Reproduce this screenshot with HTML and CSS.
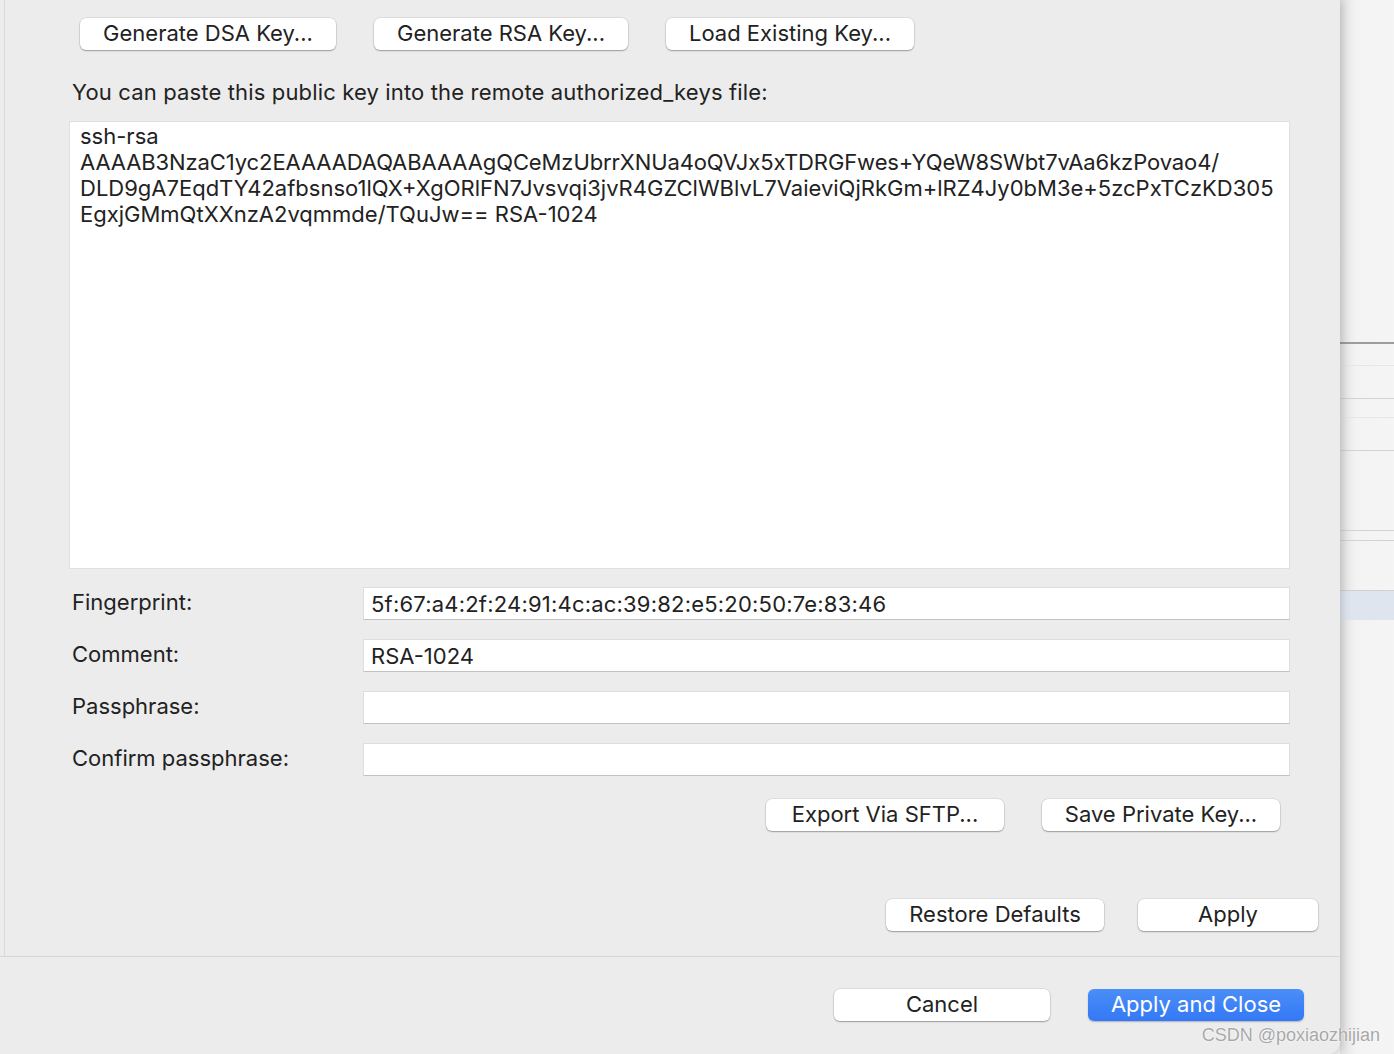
FILE: index.html
```html
<!DOCTYPE html>
<html lang="en">
<head>
  <meta charset="UTF-8" />
  <title>SSH2 Key Management</title>
  <link rel="stylesheet" href="styles.css">
</head>
<body>

  <div class="window">

    <!-- Key management page -->
    <div class="panel">
      <div class="key-buttons">
        <button class="btn btn-dsa">Generate DSA Key...</button>
        <button class="btn btn-rsa">Generate RSA Key...</button>
        <button class="btn btn-load">Load Existing Key...</button>
      </div>

      <p class="hint">You can paste this public key into the remote authorized_keys file:</p>

      <div class="key-box">
        <div>ssh-rsa</div>
        <div class="tight">AAAAB3NzaC1yc2EAAAADAQABAAAAgQCeMzUbrrXNUa4oQVJx5xTDRGFwes+YQeW8SWbt7vAa6kzPovao4/</div>
        <div>DLD9gA7EqdTY42afbsnso1lQX+XgORlFN7Jvsvqi3jvR4GZClWBlvL7VaieviQjRkGm+lRZ4Jy0bM3e+5zcPxTCzKD305</div>
        <div>EgxjGMmQtXXnzA2vqmmde/TQuJw== RSA-1024</div>
      </div>

      <div class="form">
        <div class="form-row">
          <label>Fingerprint:</label>
          <div class="field mono-ish">5f:67:a4:2f:24:91:4c:ac:39:82:e5:20:50:7e:83:46</div>
        </div>
        <div class="form-row">
          <label>Comment:</label>
          <div class="field">RSA-1024</div>
        </div>
        <div class="form-row">
          <label>Passphrase:</label>
          <div class="field"></div>
        </div>
        <div class="form-row">
          <label>Confirm passphrase:</label>
          <div class="field"></div>
        </div>
      </div>

      <div class="export-buttons">
        <button class="btn btn-export">Export Via SFTP...</button>
        <button class="btn btn-export">Save Private Key...</button>
      </div>

      <div class="page-buttons">
        <button class="btn btn-restore">Restore Defaults</button>
        <button class="btn btn-apply">Apply</button>
      </div>
    </div>

    <!-- Dialog footer -->
    <div class="footer">
      <button class="btn btn-footer">Cancel</button>
      <button class="btn btn-footer primary">Apply and Close</button>
    </div>

  </div>

  <!-- Window behind the dialog -->
  <div class="behind">
    <div class="line dark" style="top: 342px"></div>
    <div class="line faint" style="top: 365px"></div>
    <div class="line" style="top: 398px"></div>
    <div class="line faint" style="top: 417px"></div>
    <div class="line" style="top: 450px"></div>
    <div class="line" style="top: 530px"></div>
    <div class="line" style="top: 540px"></div>
    <div class="selected"></div>
  </div>

  <div class="watermark">CSDN @poxiaozhijian</div>

</body>
</html>
```

FILE: styles.css
```css
:root {
  --window: #ececec;
  --text: #222222;
  --blue: #3a80f6;
}

body {
  margin: 0;
  height: 1054px;
  overflow: hidden;
  display: flex;
  font-family: Inter, "Liberation Sans", Arial, sans-serif;
  font-size: 22px;
  color: var(--text);
  background: #f2f2f2;
}

.window {
  width: 1340px;
  height: 1054px;
  flex-shrink: 0;
  background: var(--window);
  border-bottom-right-radius: 12px;
  display: flex;
  flex-direction: column;
  position: relative;
  z-index: 1;
  box-shadow: 2px 0 10px rgba(0,0,0,0.18);
}

.panel {
  margin-left: 4px;
  height: 956px;
  border-left: 1px solid #d9d9d9;
  box-sizing: border-box;
  padding: 18px 22px 0 64px;
  display: flex;
  flex-direction: column;
}

.btn {
  font-family: inherit;
  font-size: 22px;
  color: var(--text);
  background: white;
  border: none;
  border-radius: 6px;
  height: 32px;
  padding: 0 0 3px;
  box-shadow: 0 0 0 0.5px rgba(0,0,0,0.12), 0 1px 1.5px rgba(0,0,0,0.3);
}

.key-buttons {
  display: flex;
  gap: 38px;
  padding-left: 11px;
}

.btn-dsa { width: 256px; }
.btn-rsa { width: 254px; }
.btn-load { width: 248px; }

.hint {
  margin: 30px 0 0 3px;
  line-height: 24px;
  letter-spacing: 0.15px;
}

.key-box {
  margin-top: 17px;
  width: 1221px;
  height: 448px;
  box-sizing: border-box;
  background: white;
  border: 1px solid #e0e0e0;
  padding: 1px 10px;
  line-height: 26px;
  white-space: nowrap;
}

.key-box .tight {
  letter-spacing: -0.1px;
}

.form {
  margin-top: 18px;
  display: flex;
  flex-direction: column;
  gap: 19px;
}

.form-row {
  display: flex;
  align-items: center;
}

.form-row label {
  width: 294px;
  padding: 0 0 3px 3px;
  box-sizing: border-box;
}

.field {
  width: 927px;
  height: 33px;
  box-sizing: border-box;
  background: white;
  border: 1px solid #dedede;
  border-bottom-color: #c2c2c2;
  padding: 0 7px;
  line-height: 32px;
}

.field.mono-ish {
  letter-spacing: 0.2px;
}

.export-buttons {
  margin-top: 23px;
  padding-right: 10px;
  width: 1221px;
  box-sizing: border-box;
  display: flex;
  justify-content: flex-end;
  gap: 38px;
}

.btn-export { width: 238px; }

.page-buttons {
  margin-top: 68px;
  display: flex;
  justify-content: flex-end;
  gap: 34px;
}

.btn-restore { width: 218px; }
.btn-apply { width: 180px; }

.footer {
  border-top: 1px solid #d6d6d6;
  display: flex;
  justify-content: flex-end;
  gap: 38px;
  padding: 32px 36px 0 0;
}

.btn-footer { width: 216px; }

.btn.primary {
  color: white;
  background: linear-gradient(#4a8ef8, #3478f6);
  box-shadow: 0 1px 1.5px rgba(0,0,0,0.25);
}

/* window peeking out on the right */
.behind {
  flex: 1;
  position: relative;
  background: linear-gradient(90deg, #e2e2e2, #f3f3f3 30%, #f5f5f5);
}

.line {
  position: absolute;
  left: 0;
  right: 0;
  height: 1px;
  background: #d2d2d2;
}

.line.dark {
  height: 2px;
  background: #9c9c9c;
}

.line.faint {
  background: #e6e6e6;
}

.selected {
  position: absolute;
  left: 0;
  right: 0;
  top: 590px;
  height: 29px;
  border-top: 1px solid #d0d0d0;
  background: #dfe5ef;
}

.watermark {
  position: absolute;
  right: 14px;
  bottom: 8px;
  z-index: 2;
  font-family: "Liberation Sans", Arial, sans-serif;
  font-size: 18px;
  color: #a8a8a8;
  text-shadow: 0 0 2px white, 0 0 1px white;
}
```
